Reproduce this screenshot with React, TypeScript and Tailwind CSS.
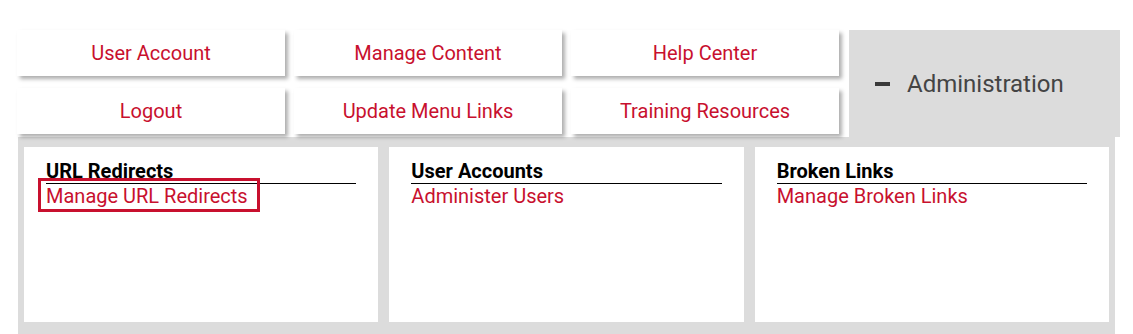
import React from "react";

const red = "text-[#c8102e]";

function NavButton({ label }: { label: string }) {
  return (
    <a
      href="#"
      className={`flex h-[46px] w-[268px] items-center justify-center bg-white text-[20px] ${red} shadow-[3px_3px_4px_rgba(0,0,0,0.32)]`}
    >
      {label}
    </a>
  );
}

function Card({
  title,
  link,
  highlight,
}: {
  title: string;
  link: string;
  highlight?: boolean;
}) {
  return (
    <div className="h-[175px] bg-white px-[22px] pt-[12px]">
      <div className="border-b border-black text-[20px] font-bold leading-[24px] text-black">
        {title}
      </div>
      <div className="relative">
        <a href="#" className={`text-[20px] leading-[24px] ${red}`}>
          {link}
        </a>
        {highlight && (
          <div className="pointer-events-none absolute left-[-8px] top-[-6px] h-[34px] w-[222px] border-[3px] border-[#c8102e]" />
        )}
      </div>
    </div>
  );
}

export default function App() {
  return (
    <div
      className="min-h-[334px] bg-white pt-[30px]"
      style={{ fontFamily: "Roboto, 'Noto Sans', Arial, sans-serif" }}
    >
      <div className="flex pl-[17px]">
        <div className="grid grid-cols-[268px_268px_268px] gap-x-[9px] gap-y-[9px] pb-[1px]">
          <NavButton label="User Account" />
          <NavButton label="Manage Content" />
          <NavButton label="Help Center" />
          <NavButton label="Logout" />
          <NavButton label="Update Menu Links" />
          <NavButton label="Training Resources" />
        </div>
        <div className="ml-[10px] flex h-[107px] w-[271px] items-center bg-[#dcdcdc] pl-[26px]">
          <span className="mr-[17px] inline-block h-[4px] w-[15px] bg-[#3a3a3a]" />
          <span className="text-[24px] text-[#444444]">Administration</span>
        </div>
      </div>
      <div className="ml-[18px] w-[1097px] bg-[#dcdcdc] px-[6px] pb-[12px] pt-[10px]">
        <div className="grid grid-cols-3 gap-x-[11px]">
          <Card title="URL Redirects" link="Manage URL Redirects" highlight />
          <Card title="User Accounts" link="Administer Users" />
          <Card title="Broken Links" link="Manage Broken Links" />
        </div>
      </div>
    </div>
  );
}
